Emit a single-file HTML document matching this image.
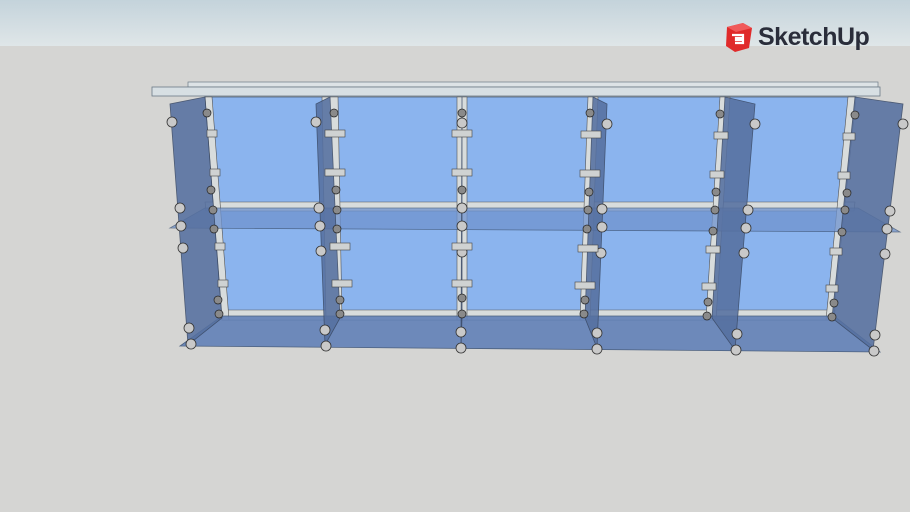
<!DOCTYPE html>
<html><head><style>
html,body{margin:0;padding:0;width:910px;height:512px;overflow:hidden;background:#d5d5d3}
.logo{position:absolute;left:725px;top:22px;display:flex;align-items:center}
.logo span{font-family:"Liberation Sans",sans-serif;font-weight:bold;font-size:25px;color:#2a2d3a;margin-left:5px;letter-spacing:-0.5px}
</style></head><body>
<svg width="910" height="512" style="position:absolute;left:0;top:0">
<defs><linearGradient id="sky" x1="0" y1="0" x2="0" y2="1"><stop offset="0" stop-color="#c4d3db"/><stop offset="1" stop-color="#dfe6e8"/></linearGradient></defs>
<rect x="0" y="0" width="910" height="46" fill="url(#sky)"/>
<rect x="0" y="46" width="910" height="466" fill="#d5d5d3"/>
<!-- top bar -->
<rect x="188" y="82" width="690" height="5" fill="#dde3e6" stroke="#6b7a85" stroke-width="0.7"/>
<rect x="152" y="87" width="728" height="9" fill="#d7dfe3" stroke="#6b7a85" stroke-width="0.8"/>
<!-- back wall -->
<polygon points="205,97 855,97 832,320 222,320" fill="#8bb4ee" stroke="#4a5a70" stroke-width="0.8"/>
<!-- frame -->
<polygon points="205,202 855,202 854,211 206,211" fill="#d8dcdc" stroke="#555" stroke-width="0.6"/>
<polygon points="218,310 835,310 834,320 222,320" fill="#d8dcdc" stroke="#555" stroke-width="0.6"/>
<g fill="#d8dcdc" stroke="#555" stroke-width="0.6">
<polygon points="205,97 212,97 229,320 222,320"/>
<polygon points="322,97 338,97 342,320 326,320"/>
<polygon points="457,97 467,97 467,320 457,320"/>
<polygon points="588,97 598,97 590,320 580,320"/>
<polygon points="720,97 730,97 716,320 706,320"/>
<polygon points="848,97 856,97 833,320 826,320"/>
</g>
<!-- middle shelf -->
<polygon points="205,208 858,208 900,232 170,228" fill="#6f93cf" opacity="0.75" stroke="#3e5475" stroke-width="0.8"/>
<!-- bottom shelf -->
<polygon points="222,316 834,316 880,352 180,346" fill="#6281b8" opacity="0.9" stroke="#3e5475" stroke-width="0.8"/>
<!-- side panels -->
<g fill="#5670a0" opacity="0.88" stroke="#3a4a66" stroke-width="0.8">
<polygon points="205,97 170,104 188,345 222,318"/>
<polygon points="330,97 316,104 325,345 340,318"/>
<polygon points="462,97 462,104 461,348 462,318"/>
<polygon points="593,97 607,104 597,348 585,318"/>
<polygon points="725,97 755,104 735,350 712,318"/>
<polygon points="855,97 903,104 873,350 832,318"/>
</g>
<!-- bolts -->
<g fill="#c9c9c9" stroke="#333" stroke-width="0.8">
<circle cx="172" cy="122" r="5"/><circle cx="180" cy="208" r="5"/><circle cx="181" cy="226" r="5"/><circle cx="183" cy="248" r="5"/><circle cx="189" cy="328" r="5"/><circle cx="191" cy="344" r="5"/>
<circle cx="316" cy="122" r="5"/><circle cx="319" cy="208" r="5"/><circle cx="320" cy="226" r="5"/><circle cx="321" cy="251" r="5"/><circle cx="325" cy="330" r="5"/><circle cx="326" cy="346" r="5"/>
<circle cx="462" cy="123" r="5"/><circle cx="462" cy="208" r="5"/><circle cx="462" cy="226" r="5"/><circle cx="462" cy="252" r="5"/><circle cx="461" cy="332" r="5"/><circle cx="461" cy="348" r="5"/>
<circle cx="607" cy="124" r="5"/><circle cx="602" cy="209" r="5"/><circle cx="602" cy="227" r="5"/><circle cx="601" cy="253" r="5"/><circle cx="597" cy="333" r="5"/><circle cx="597" cy="349" r="5"/>
<circle cx="755" cy="124" r="5"/><circle cx="748" cy="210" r="5"/><circle cx="746" cy="228" r="5"/><circle cx="744" cy="253" r="5"/><circle cx="737" cy="334" r="5"/><circle cx="736" cy="350" r="5"/>
<circle cx="903" cy="124" r="5"/><circle cx="890" cy="211" r="5"/><circle cx="887" cy="229" r="5"/><circle cx="885" cy="254" r="5"/><circle cx="875" cy="335" r="5"/><circle cx="874" cy="351" r="5"/>
</g>
<g fill="#8a8a8a" stroke="#222" stroke-width="0.7">
<circle cx="207" cy="113" r="4"/><circle cx="211" cy="190" r="4"/><circle cx="213" cy="210" r="4"/><circle cx="214" cy="229" r="4"/><circle cx="218" cy="300" r="4"/><circle cx="219" cy="314" r="4"/>
<circle cx="334" cy="113" r="4"/><circle cx="336" cy="190" r="4"/><circle cx="337" cy="210" r="4"/><circle cx="337" cy="229" r="4"/><circle cx="340" cy="300" r="4"/><circle cx="340" cy="314" r="4"/>
<circle cx="462" cy="113" r="4"/><circle cx="462" cy="190" r="4"/><circle cx="462" cy="298" r="4"/><circle cx="462" cy="314" r="4"/>
<circle cx="590" cy="113" r="4"/><circle cx="589" cy="192" r="4"/><circle cx="588" cy="210" r="4"/><circle cx="587" cy="229" r="4"/><circle cx="585" cy="300" r="4"/><circle cx="584" cy="314" r="4"/>
<circle cx="720" cy="114" r="4"/><circle cx="716" cy="192" r="4"/><circle cx="715" cy="210" r="4"/><circle cx="713" cy="231" r="4"/><circle cx="708" cy="302" r="4"/><circle cx="707" cy="316" r="4"/>
<circle cx="855" cy="115" r="4"/><circle cx="847" cy="193" r="4"/><circle cx="845" cy="210" r="4"/><circle cx="842" cy="232" r="4"/><circle cx="834" cy="303" r="4"/><circle cx="832" cy="317" r="4"/>
</g>
<g fill="#cfd2d2" stroke="#444" stroke-width="0.6">
<rect x="207" y="130" width="10" height="7"/><rect x="210" y="169" width="10" height="7"/><rect x="215" y="243" width="10" height="7"/><rect x="218" y="280" width="10" height="7"/>
<rect x="325" y="130" width="20" height="7"/><rect x="325" y="169" width="20" height="7"/><rect x="330" y="243" width="20" height="7"/><rect x="332" y="280" width="20" height="7"/>
<rect x="452" y="130" width="20" height="7"/><rect x="452" y="169" width="20" height="7"/><rect x="452" y="243" width="20" height="7"/><rect x="452" y="280" width="20" height="7"/>
<rect x="581" y="131" width="20" height="7"/><rect x="580" y="170" width="20" height="7"/><rect x="578" y="245" width="20" height="7"/><rect x="575" y="282" width="20" height="7"/>
<rect x="714" y="132" width="14" height="7"/><rect x="710" y="171" width="14" height="7"/><rect x="706" y="246" width="14" height="7"/><rect x="702" y="283" width="14" height="7"/>
<rect x="843" y="133" width="12" height="7"/><rect x="838" y="172" width="12" height="7"/><rect x="830" y="248" width="12" height="7"/><rect x="826" y="285" width="12" height="7"/>
</g>
</svg>
<div class="logo">
<svg width="28" height="30" viewBox="0 0 28 30"><polygon points="2,5 18,1 27,6 24,26 10,30 1,24" fill="#e02b2b"/><polygon points="2,5 18,1 27,6 11,10" fill="#f05a5a"/><path d="M7 13h11v3h-7v2h7v3h-8" stroke="#fff" stroke-width="2.2" fill="none"/></svg>
<span>SketchUp</span>
</div>
</body></html>
